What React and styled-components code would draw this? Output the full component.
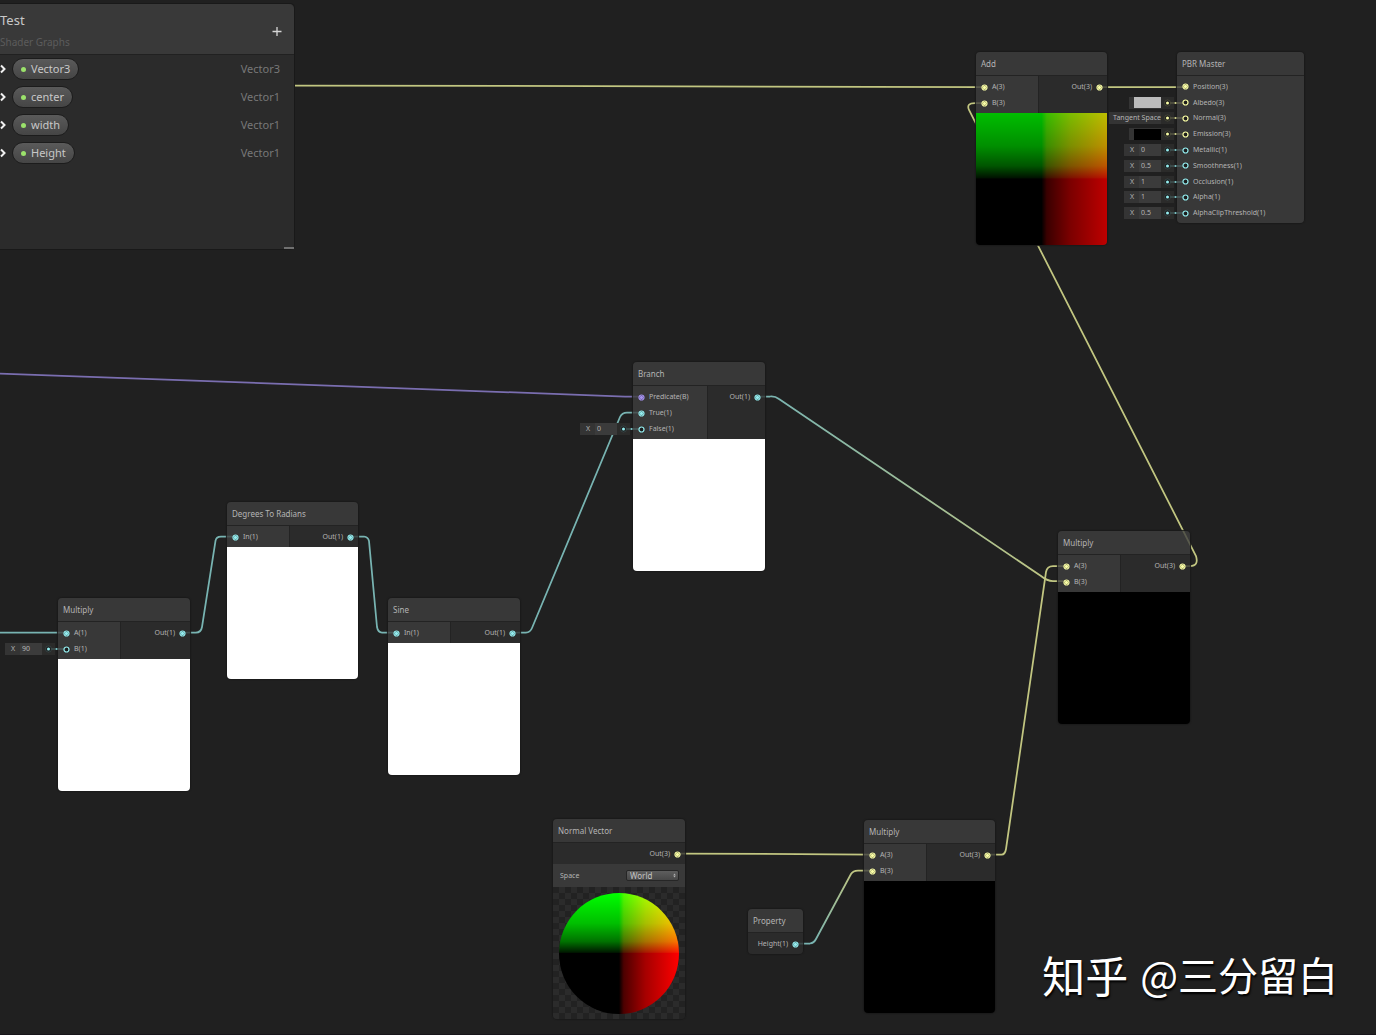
import React from 'react';
import styled, { createGlobalStyle } from 'styled-components';

const YELLOW = '#fbffa6';
const TEAL = '#94eef0';
const PURPLE = '#a592f0';

const YELLOW_WIRE = '#c2c681';
const TEAL_WIRE = '#78b4b2';
const PURPLE_WIRE = '#7a6eb0';

const portColors = { vec: YELLOW, num: TEAL, bool: PURPLE };

const GlobalStyle = createGlobalStyle`
    body {
        margin: 0;
        background-color: #202020;
    }

    * {
        box-sizing: border-box;
    }
`;

const Canvas = styled.main`
    position: relative;
    width: 100%;
    min-height: 100vh;
    overflow: hidden;
    background-color: #202020;
    border-bottom: 1px solid #17151a;
    font-family: 'Noto Sans', 'Noto Sans CJK SC', sans-serif;
    color: #b4b4b4;
`;

const Wires = styled.svg`
    position: absolute;
    inset: 0;
    width: 100%;
    height: 100%;
    fill: none;
    stroke-width: 1.75;
`;

/* Blackboard */

const Blackboard = styled.section`
    position: absolute;
    left: 0;
    top: 3px;
    width: 295px;
    min-height: 247px;
    background-color: #2b2b2b;
    border: 1px solid #191919;
    border-left: none;
    border-radius: 0 5px 5px 0;
`;

const BoardHeader = styled.header`
    display: flex;
    align-items: center;
    justify-content: space-between;
    height: 51px;
    padding: 4px 10px 0 0;
    background-color: #393939;
    border-bottom: 1px solid #212121;
    border-radius: 0 5px 0 0;
`;

const BoardTitle = styled.h1`
    margin: 0;
    font-size: 13px;
    line-height: 22px;
    font-weight: 400;
    color: #c8c8c8;
`;

const BoardSubtitle = styled.p`
    margin: 0;
    font-size: 10px;
    line-height: 22px;
    color: #5c5c5c;
`;

const IconButton = styled.button`
    display: flex;
    padding: 0;
    border: none;
    background: none;
    color: #d6d6d6;
    cursor: pointer;
`;

const BoardList = styled.ul`
    margin: 0;
    padding: 0;
    list-style: none;
`;

const BoardRow = styled.li`
    display: flex;
    align-items: center;
    height: 28px;
    padding-right: 14px;
    font-size: 11px;
    line-height: 14px;
`;

const Pill = styled.span`
    display: flex;
    align-items: center;
    gap: 5px;
    height: 22px;
    margin-left: 5px;
    padding: 0 8px;
    border: 1px solid #1c1c1c;
    border-radius: 11px;
    background: linear-gradient(#5a5a5a, #454545);
    color: #c8c8c8;

    &::before {
        content: '';
        width: 5px;
        height: 5px;
        border-radius: 50%;
        background-color: #9be26b;
    }
`;

const TypeName = styled.span`
    margin-left: auto;
    color: #787878;
`;

const ResizeHandle = styled.span`
    position: absolute;
    right: 0;
    bottom: 0;
    width: 10px;
    height: 2px;
    background-color: #707070;
`;

/* Nodes */

const NodeBox = styled.article`
    position: absolute;
    left: ${props => props.$x}px;
    top: ${props => props.$y}px;
    width: ${props => props.$width}px;
    border-radius: 4px;
    box-shadow: 0 0 1px 1px #1a1a1a;
`;

const NodeTitle = styled.h2`
    height: 24px;
    margin: 0;
    padding-left: 5px;
    border-bottom: 1px solid #232323;
    border-radius: 4px 4px 0 0;
    background-color: rgba(63, 63, 63, 0.8);
    font-size: 8px;
    line-height: 23px;
    font-weight: 400;
    white-space: nowrap;
`;

const NodeBody = styled.div`
    display: flex;
    height: ${props => (props.$height ? props.$height + 'px' : 'auto')};
`;

const Inputs = styled.ul`
    display: flex;
    flex-direction: column;
    flex: ${props => (props.$width ? `0 0 ${props.$width}px` : '1')};
    margin: 0;
    padding: 3px 0 2px;
    list-style: none;
    background-color: rgba(63, 63, 63, 0.8);
    border-radius: ${props => (props.$width ? '0' : '0 0 4px 4px')};
`;

const Outputs = styled.ul`
    flex: 1;
    margin: 0;
    padding: 3px 3px 2px 0;
    list-style: none;
    background-color: rgba(46, 46, 46, 0.8);
    border-left: ${props => (props.$divided ? '1px solid #232323' : 'none')};
    border-radius: ${props => (props.$rounded ? '0 0 4px 4px' : '0')};
`;

const PortRow = styled.li`
    position: relative;
    display: flex;
    flex: 1 1 16px;
    align-items: center;
    justify-content: ${props => (props.$out ? 'flex-end' : 'flex-start')};
    gap: 3px;
    min-height: 0;
    padding-left: ${props => (props.$out ? '0' : '4px')};
    font-size: 7px;
    line-height: 16px;
    white-space: nowrap;
`;

const Preview = styled.div`
    height: 132px;
    border-radius: 0 0 4px 4px;
    background: ${props => props.$fill};
`;

const normalRamp = (g, r) => `
    linear-gradient(rgb(0, ${g}, 0), rgb(0, ${g * 0.75}, 0) 25%, rgb(0, ${g * 0.45}, 0) 40%, rgb(0, ${g * 0.1}, 0) 49%, #000 50%),
    linear-gradient(90deg, #000 50%, rgb(${r * 0.3}, 0, 0) 54%, rgb(${r * 0.65}, 0, 0) 72%, rgb(${r}, 0, 0))
`;

const SquarePreview = styled(Preview)`
    background: ${normalRamp(190, 190)};
    background-blend-mode: screen;
`;

const CheckerPreview = styled(Preview)`
    padding: 6px 6px 5px;
    background: repeating-conic-gradient(#2b2b2b 0 25%, #222222 0 50%) 0 0 / 12px 12px;
`;

const Sphere = styled.div`
    height: 100%;
    border-radius: 50%;
    background: ${normalRamp(255, 255)};
    background-blend-mode: screen;
`;

/* Default value slots hanging off the unconnected inputs */

const Slot = styled.div`
    position: absolute;
    right: calc(100% + 3px);
    display: flex;
    align-items: center;
    height: 12px;
    min-width: ${props => (props.$color ? '45px' : '50px')};
    padding-left: ${props => (props.$color ? '5px' : '4px')};
    background-color: #343434;
    line-height: 12px;
`;

const SlotLabel = styled.label`
    display: flex;
    flex: 1;
    align-items: center;
    justify-content: space-between;
    padding-left: 2px;
`;

const SlotInput = styled.input`
    width: 22px;
    height: 12px;
    padding: 0 0 0 2px;
    border: none;
    background-color: #3b3b3b;
    color: inherit;
    font: inherit;
`;

const ColorInput = styled.input`
    width: 27px;
    height: 11px;
    padding: 0;
    border: none;
    background: none;
    appearance: none;

    &::-webkit-color-swatch-wrapper {
        padding: 0;
    }

    &::-webkit-color-swatch {
        border: none;
        border-radius: 0;
    }
`;

const Socket = styled.svg`
    flex: none;
    margin-left: auto;
    overflow: visible;
    background-color: #2b2b2a;
`;

const ControlRow = styled.label`
    display: flex;
    align-items: center;
    justify-content: space-between;
    height: 23px;
    padding: 0 6px 0 7px;
    background-color: #393939;
    font-size: 7px;
`;

const SelectWrap = styled.span`
    position: relative;
    display: flex;
`;

const SpaceSelect = styled.select`
    width: 53px;
    height: 11px;
    padding: 0 0 0 3px;
    border: 1px solid #262626;
    border-radius: 2px;
    background: linear-gradient(#5e5e5e, #484848);
    color: #c4c4c4;
    font-family: inherit;
    font-size: 8px;
    line-height: 9px;
    appearance: none;
`;

const SelectArrows = styled.svg`
    position: absolute;
    right: 3px;
    top: 3px;
    pointer-events: none;
`;

const Watermark = styled.p`
    position: absolute;
    right: 38px;
    bottom: 30px;
    display: flex;
    align-items: center;
    gap: 12px;
    margin: 0;
    font-family: 'Noto Sans CJK SC', sans-serif;
    font-size: 40px;
    line-height: 60px;
    color: #ffffff;
    text-shadow: 1px 2px 2px #000000;
`;

const WatermarkBrand = styled.span`
    font-size: 43px;
`;

function Port({ type, connected }) {
    const color = portColors[type];
    return (
        <svg width="9" height="9" viewBox="0 0 9 9" aria-hidden="true">
            <circle cx="4.5" cy="4.5" r="2.5" fill="#1c1c1c" stroke={color} strokeWidth="1.2" />
            {connected && <circle cx="4.5" cy="4.5" r="1.7" fill={color} />}
        </svg>
    );
}

function DefaultSlot({ type, slot, name }) {
    return (
        <Slot $color={slot.color}>
            {slot.color && <ColorInput type="color" defaultValue={slot.color} aria-label={name} />}
            {slot.text && <span>{slot.text}</span>}
            {slot.x && (
                <SlotLabel>
                    X
                    <SlotInput type="text" defaultValue={slot.x} />
                </SlotLabel>
            )}
            <Socket width="13" height="12" aria-hidden="true">
                <path d="M7 6H22" stroke={portColors[type]} strokeOpacity="0.3" />
                <circle cx="6.5" cy="6" r="3" stroke={portColors[type]} strokeOpacity="0.15" fill="#1c1c1c" />
                <circle cx="6.5" cy="6" r="1.5" fill={portColors[type]} />
                <circle cx="14.5" cy="6" r="1" fill={portColors[type]} fillOpacity="0.8" />
            </Socket>
        </Slot>
    );
}

function Node({ title, x, y, width = 132, inputWidth = 62, bodyHeight, inputs, outputs, children }) {
    return (
        <NodeBox $x={x} $y={y} $width={width}>
            <NodeTitle>{title}</NodeTitle>
            <NodeBody $height={bodyHeight}>
                {inputs && (
                    <Inputs $width={outputs && inputWidth}>
                        {inputs.map(port => (
                            <PortRow key={port.name}>
                                {port.slot && <DefaultSlot type={port.type} slot={port.slot} name={port.name} />}
                                <Port type={port.type} connected={!port.slot} />
                                {port.name}
                            </PortRow>
                        ))}
                    </Inputs>
                )}
                {outputs && (
                    <Outputs $divided={Boolean(inputs)} $rounded={!children}>
                        {outputs.map(port => (
                            <PortRow key={port.name} $out>
                                {port.name}
                                <Port type={port.type} connected />
                            </PortRow>
                        ))}
                    </Outputs>
                )}
            </NodeBody>
            {children}
        </NodeBox>
    );
}

const properties = [
    { name: 'Vector3', type: 'Vector3' },
    { name: 'center', type: 'Vector1' },
    { name: 'width', type: 'Vector1' },
    { name: 'Height', type: 'Vector1' },
];

const masterInputs = [
    { name: 'Position(3)', type: 'vec' },
    { name: 'Albedo(3)', type: 'vec', slot: { color: '#bcbcbc' } },
    { name: 'Normal(3)', type: 'vec', slot: { text: 'Tangent Space' } },
    { name: 'Emission(3)', type: 'vec', slot: { color: '#000000' } },
    { name: 'Metallic(1)', type: 'num', slot: { x: '0' } },
    { name: 'Smoothness(1)', type: 'num', slot: { x: '0.5' } },
    { name: 'Occlusion(1)', type: 'num', slot: { x: '1' } },
    { name: 'Alpha(1)', type: 'num', slot: { x: '1' } },
    { name: 'AlphaClipThreshold(1)', type: 'num', slot: { x: '0.5' } },
];

const vecInputs = [
    { name: 'A(3)', type: 'vec' },
    { name: 'B(3)', type: 'vec' },
];
const numIn = [{ name: 'In(1)', type: 'num' }];
const vecOut = [{ name: 'Out(3)', type: 'vec' }];
const numOut = [{ name: 'Out(1)', type: 'num' }];

const wires = [
    { d: 'M290 85.5L983 87', stroke: YELLOW_WIRE },
    { d: 'M1099 87H1185', stroke: YELLOW_WIRE },
    { d: 'M1182 566H1190Q1199 566 1196 556L969 110Q966 103 975 103H984', stroke: YELLOW_WIRE },
    { d: 'M0 373.5L625 396.5H641', stroke: PURPLE_WIRE },
    { d: 'M757 396.5H770Q775 396 779 399L1041 576Q1047 581 1053 581H1066', stroke: 'url(#branchWire)' },
    { d: 'M182 632.5H195Q201 633 202 627L215.5 541Q216 536.5 221 536.5H234', stroke: TEAL_WIRE },
    { d: 'M351 536.5H364Q368 537 369 541L377 627Q378 632.5 382 632.5H396', stroke: TEAL_WIRE },
    { d: 'M512 632.5H525Q530 633 532 628L620 417Q622 412.5 627 412.5H641', stroke: TEAL_WIRE },
    { d: 'M0 632.5H66', stroke: TEAL_WIRE },
    { d: 'M677 853.5L872 854.5', stroke: YELLOW_WIRE },
    { d: 'M796 943.5H810Q814 943 816 939L851 874Q853 870.5 858 870.5H872', stroke: 'url(#propertyWire)' },
    { d: 'M988 854.5H1001Q1005 855 1006 849L1046 572Q1047 566 1053 566H1066', stroke: YELLOW_WIRE },
];

export default function App() {
    return (
        <>
            <GlobalStyle />
            <Canvas>
                <Wires aria-hidden="true">
                    <defs>
                        <linearGradient id="branchWire" gradientUnits="userSpaceOnUse" x1="757" y1="397" x2="1066" y2="581">
                            <stop offset="0" stopColor={TEAL_WIRE} />
                            <stop offset="1" stopColor={YELLOW_WIRE} />
                        </linearGradient>
                        <linearGradient id="propertyWire" gradientUnits="userSpaceOnUse" x1="811" y1="943" x2="858" y2="870">
                            <stop offset="0" stopColor={TEAL_WIRE} />
                            <stop offset="1" stopColor={YELLOW_WIRE} />
                        </linearGradient>
                    </defs>
                    {wires.map(wire => (
                        <path key={wire.d} d={wire.d} stroke={wire.stroke} />
                    ))}
                </Wires>

                <Node title="Add" x={976} y={52} width={131} inputs={vecInputs} outputs={vecOut}>
                    <SquarePreview />
                </Node>
                <Node title="PBR Master" x={1177} y={52} width={127} bodyHeight={147} inputs={masterInputs} />
                <Node
                    title="Branch"
                    x={633}
                    y={362}
                    inputWidth={74}
                    inputs={[
                        { name: 'Predicate(B)', type: 'bool' },
                        { name: 'True(1)', type: 'num' },
                        { name: 'False(1)', type: 'num', slot: { x: '0' } },
                    ]}
                    outputs={numOut}
                >
                    <Preview $fill="#ffffff" />
                </Node>
                <Node title="Degrees To Radians" x={227} y={502} width={131} inputs={numIn} outputs={numOut}>
                    <Preview $fill="#ffffff" />
                </Node>
                <Node
                    title="Multiply"
                    x={58}
                    y={598}
                    inputs={[
                        { name: 'A(1)', type: 'num' },
                        { name: 'B(1)', type: 'num', slot: { x: '90' } },
                    ]}
                    outputs={numOut}
                >
                    <Preview $fill="#ffffff" />
                </Node>
                <Node title="Sine" x={388} y={598} inputs={numIn} outputs={numOut}>
                    <Preview $fill="#ffffff" />
                </Node>
                <Node title="Multiply" x={1058} y={531} inputs={vecInputs} outputs={vecOut}>
                    <Preview $fill="#000000" />
                </Node>
                <Node title="Normal Vector" x={553} y={819} outputs={vecOut}>
                    <ControlRow>
                        Space
                        <SelectWrap>
                            <SpaceSelect defaultValue="World">
                                <option>World</option>
                                <option>Object</option>
                                <option>View</option>
                                <option>Tangent</option>
                            </SpaceSelect>
                            <SelectArrows width="3" height="5" viewBox="0 0 5 7" fill="#b4b4b4" aria-hidden="true">
                                <path d="M2.5 0L4.5 3H0.5ZM2.5 7L4.5 4H0.5Z" />
                            </SelectArrows>
                        </SelectWrap>
                    </ControlRow>
                    <CheckerPreview>
                        <Sphere />
                    </CheckerPreview>
                </Node>
                <Node title="Property" x={748} y={909} width={55} outputs={[{ name: 'Height(1)', type: 'num' }]} />
                <Node title="Multiply" x={864} y={820} width={131} inputs={vecInputs} outputs={vecOut}>
                    <Preview $fill="#000000" />
                </Node>

                <Blackboard>
                    <BoardHeader>
                        <div>
                            <BoardTitle>Test</BoardTitle>
                            <BoardSubtitle>Shader Graphs</BoardSubtitle>
                        </div>
                        <IconButton type="button" aria-label="Add property">
                            <svg width="14" height="14" viewBox="0 0 14 14" stroke="currentColor" strokeWidth="1.3" aria-hidden="true">
                                <path d="M7 3V12M2.5 7.5H11.5" />
                            </svg>
                        </IconButton>
                    </BoardHeader>
                    <BoardList>
                        {properties.map(property => (
                            <BoardRow key={property.name}>
                                <IconButton type="button" aria-label={`Expand ${property.name}`}>
                                    <svg width="7" height="10" viewBox="0 0 7 10" fill="none" stroke="#f0f0f0" strokeWidth="2" aria-hidden="true">
                                        <path d="M1 1.5L4.5 5L1 8.5" />
                                    </svg>
                                </IconButton>
                                <Pill>{property.name}</Pill>
                                <TypeName>{property.type}</TypeName>
                            </BoardRow>
                        ))}
                    </BoardList>
                    <ResizeHandle />
                </Blackboard>

                <Watermark>
                    <WatermarkBrand>知乎</WatermarkBrand>
                    <span>@三分留白</span>
                </Watermark>
            </Canvas>
        </>
    );
}
